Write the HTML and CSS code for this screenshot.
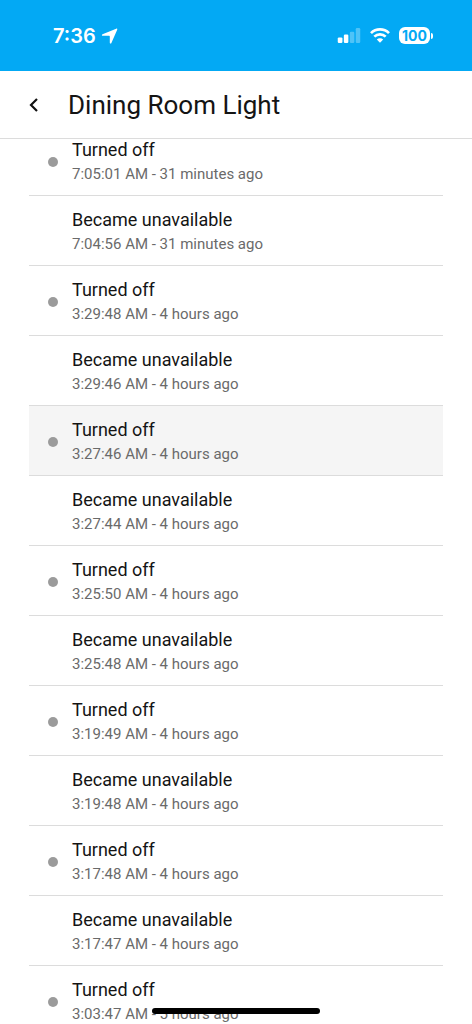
FILE: index.html
```html
<!DOCTYPE html>
<html lang="en">
<head>
<meta charset="utf-8">
<meta name="viewport" content="width=device-width, initial-scale=1">
<title>Dining Room Light</title>
<link rel="stylesheet" href="styles.css">
</head>
<body>
<div class="app">
  <div class="status-bar">
    <div class="status-time">
      <span>7:36</span>
      <svg class="location" width="17" height="16" viewBox="0 0 16 16" aria-hidden="true"><path d="M14.700.7c.8-.3 1.300.2 1 1L9.900 15c-.4.9-1.600.8-1.600-.3V8.400c0-.4-.2-.6-.6-.6H1.300c-1.100 0-1.200-1.200-.3-1.600z" fill="#fff"/></svg>
    </div>
    <div class="status-icons">
      <svg width="24" height="15" viewBox="0 0 24 16" fill="#fff" aria-label="Signal"><rect x="0" y="10" width="5" height="6" rx="1.300"/><rect x="6.500" y="7" width="4.800" height="9" rx="1.300"/><rect x="12.900" y="4" width="4.800" height="12" rx="1.300" opacity=".3"/><rect x="19.200" y="0" width="4.800" height="16" rx="1.300" opacity=".3"/></svg>
      <svg width="20" height="15" viewBox="0 0 20 15" aria-label="Wi-Fi"><g fill="none" stroke="#fff" stroke-width="2.700"><path d="M1 5.100a12.800 12.800 0 0 1 18 0"/><path d="M4.300 8.600a8.200 8.200 0 0 1 11.400 0"/></g><path d="M10 14.700l-3.200-3.200a4.600 4.600 0 0 1 6.400 0z" fill="#fff"/></svg>
      <div class="battery"><span class="battery-level">100</span><span class="battery-tip"></span></div>
    </div>
  </div>
  <header class="header">
    <button class="back" type="button" aria-label="Back"><svg width="24" height="24" viewBox="0 0 24 24" aria-hidden="true"><path d="M15 6l-6 6 6 6" fill="none" stroke="#111" stroke-width="2.200"/></svg></button>
    <h1 class="title">Dining Room Light</h1>
  </header>
  <main class="content">
    <ul class="log">
      <li class="entry"><span class="dot"></span><div><div class="event">Turned off</div><div class="when">7:05:01 AM - 31 minutes ago</div></div></li>
      <li class="entry"><div><div class="event">Became unavailable</div><div class="when">7:04:56 AM - 31 minutes ago</div></div></li>
      <li class="entry"><span class="dot"></span><div><div class="event">Turned off</div><div class="when">3:29:48 AM - 4 hours ago</div></div></li>
      <li class="entry"><div><div class="event">Became unavailable</div><div class="when">3:29:46 AM - 4 hours ago</div></div></li>
      <li class="entry selected"><span class="dot"></span><div><div class="event">Turned off</div><div class="when">3:27:46 AM - 4 hours ago</div></div></li>
      <li class="entry"><div><div class="event">Became unavailable</div><div class="when">3:27:44 AM - 4 hours ago</div></div></li>
      <li class="entry"><span class="dot"></span><div><div class="event">Turned off</div><div class="when">3:25:50 AM - 4 hours ago</div></div></li>
      <li class="entry"><div><div class="event">Became unavailable</div><div class="when">3:25:48 AM - 4 hours ago</div></div></li>
      <li class="entry"><span class="dot"></span><div><div class="event">Turned off</div><div class="when">3:19:49 AM - 4 hours ago</div></div></li>
      <li class="entry"><div><div class="event">Became unavailable</div><div class="when">3:19:48 AM - 4 hours ago</div></div></li>
      <li class="entry"><span class="dot"></span><div><div class="event">Turned off</div><div class="when">3:17:48 AM - 4 hours ago</div></div></li>
      <li class="entry"><div><div class="event">Became unavailable</div><div class="when">3:17:47 AM - 4 hours ago</div></div></li>
      <li class="entry"><span class="dot"></span><div><div class="event">Turned off</div><div class="when">3:03:47 AM - 5 hours ago</div></div></li>
    </ul>
  </main>
  <div class="home-indicator"></div>
</div>
</body>
</html>
```
FILE: styles.css
```css
* { box-sizing: border-box; }
body { margin: 0; background: #fff; color: #141414; font-family: Roboto, sans-serif; }
.app { position: relative; height: 100vh; display: flex; flex-direction: column; overflow: hidden; }
.status-bar { flex: none; display: flex; align-items: center; justify-content: space-between; height: 71px; padding: 0 39px 0 53px; background: #03a9f4; color: #fff; }
.status-time { display: flex; align-items: center; gap: 5px; font: 600 20px/24px Inter, sans-serif; }
.status-icons { display: flex; align-items: center; gap: 9px; }
.battery { display: flex; align-items: center; gap: 1px; }
.battery-level { padding: 0 3px; border-radius: 6px; background: #fff; color: #03a9f4; font: 700 14px/17px Inter, sans-serif; }
.battery-tip { width: 2px; height: 6px; border-radius: 0 2px 2px 0; background: #fff; }
.header { flex: none; display: flex; align-items: center; gap: 22px; height: 68px; padding: 0 22px; border-bottom: 1px solid #dcdcdc; }
.back { display: flex; padding: 0; border: 0; background: none; cursor: pointer; }
.title { margin: 0; font-size: 26px; line-height: 32px; font-weight: 400; }
.content { flex: 1; min-height: 0; overflow: hidden; padding: 0 29px; }
.log { margin: -13px 0 0; padding: 0; list-style: none; }
.entry { position: relative; padding: 12px 16px 8px 43px; border-bottom: 1px solid #dcdcdc; }
.selected { background: #f5f5f5; }
.dot { position: absolute; left: 19px; top: 31px; width: 10px; height: 10px; border-radius: 50%; background: #9b9b9b; }
.event { font-size: 18px; line-height: 24px; }
.when { font-size: 15px; line-height: 25px; color: #6a6a6a; }
.home-indicator { position: absolute; left: 50%; bottom: 10px; width: 168px; height: 6px; margin-left: -84px; border-radius: 3px; background: #000; }
```
